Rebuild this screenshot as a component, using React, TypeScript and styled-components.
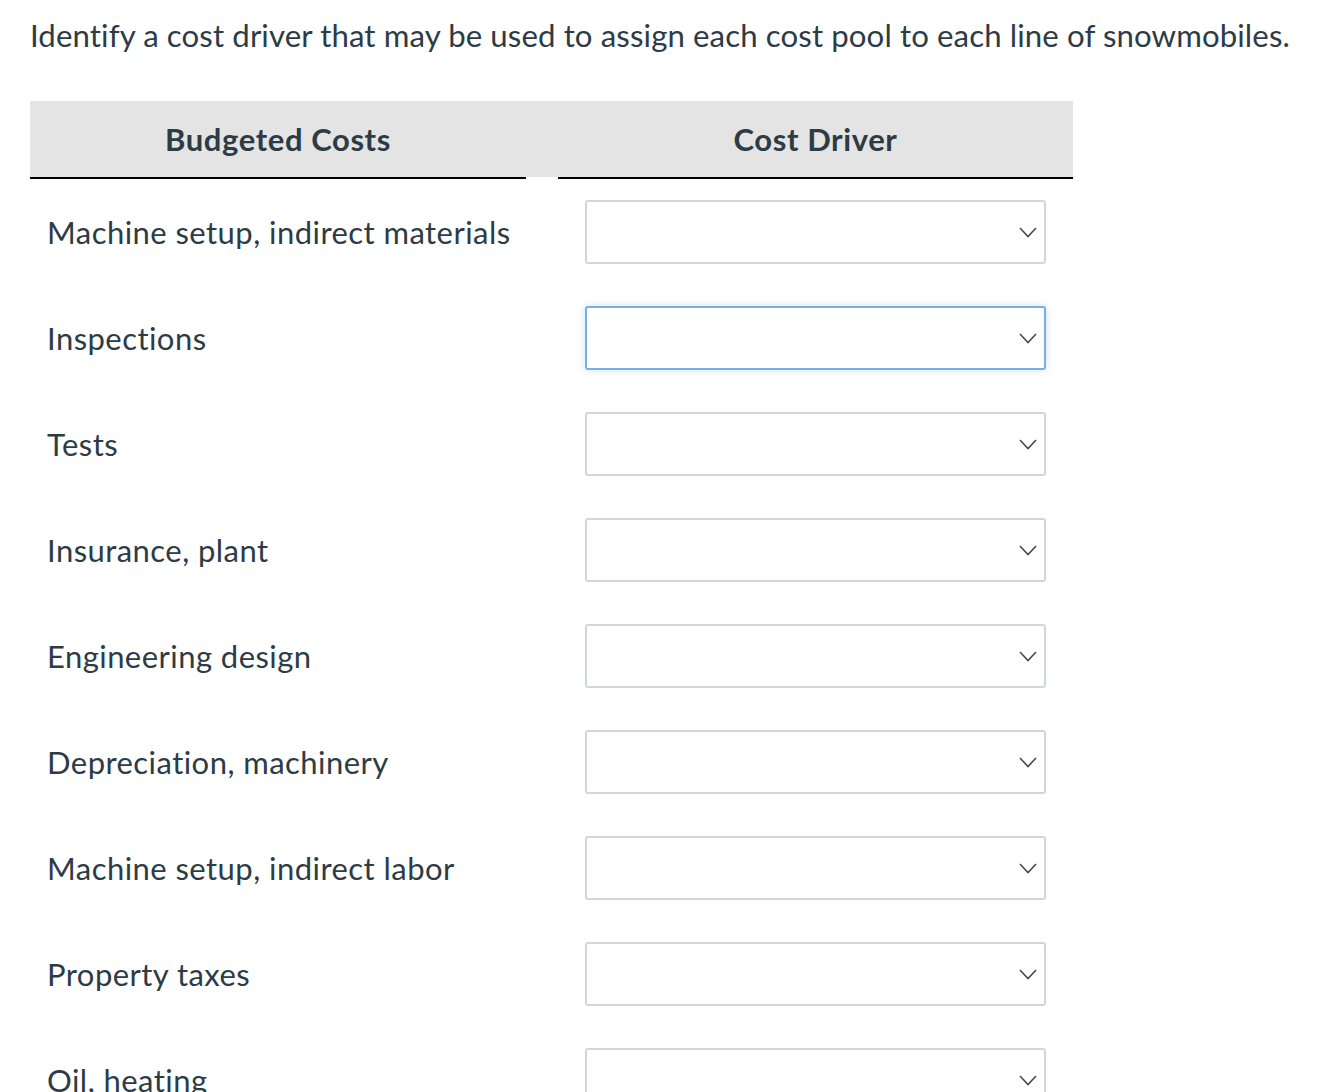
import React from 'react';
import styled, {createGlobalStyle} from "styled-components";

const GlobalStyle = createGlobalStyle`
  body {
    margin: 0;
    background: #fff;
    font-family: Lato, "Open Sans", sans-serif;
    color: #2d3b45;
  }
`

const rows = [
    'Machine setup, indirect materials',
    'Inspections',
    'Tests',
    'Insurance, plant',
    'Engineering design',
    'Depreciation, machinery',
    'Machine setup, indirect labor',
    'Property taxes',
    'Oil, heating',
]

const Chevron = () => (
    <svg width="18" height="11" viewBox="0 0 18 11" fill="none">
        <path d="M1 1 L9 9.5 L17 1" stroke="#4a4a4a" strokeWidth="1.6"/>
    </svg>
)

export default function App() {
    return (
        <Page>
            <GlobalStyle/>
            <Question>Identify a cost driver that may be used to assign each cost pool to each line of snowmobiles.</Question>
            <Table>
                <HeadCell>Budgeted Costs</HeadCell>
                <HeadCell>Cost Driver</HeadCell>
                {rows.map((label, i) => (
                    <React.Fragment key={i}>
                        <LabelCell>{label}</LabelCell>
                        <SelectCell>
                            <SelectBox focused={i === 1}>
                                <Chevron/>
                            </SelectBox>
                        </SelectCell>
                    </React.Fragment>
                ))}
            </Table>
        </Page>
    )
}

const Page = styled.div`
  padding: 16px 0 0 30px;
  height: 1092px;
  overflow: hidden;
  box-sizing: border-box;
`

const Question = styled.p`
  margin: 0 0 47px;
  font-size: 31.2px;
  letter-spacing: 0.1px;
  line-height: 38px;
  white-space: nowrap;
`

const Table = styled.div`
  display: grid;
  grid-template-columns: 496px 515px;
  column-gap: 32px;
  width: 1043px;
  background: linear-gradient(#e4e4e4, #e4e4e4) top / 100% 76px no-repeat;
`

const HeadCell = styled.div`
  height: 76px;
  border-bottom: 2px solid #000;
  display: flex;
  align-items: center;
  justify-content: center;
  font-size: 31px;
  letter-spacing: 0.6px;
  font-weight: 700;
`

const LabelCell = styled.div`
  display: flex;
  align-items: center;
  padding: 21px 0 21px 17px;
  font-size: 31px;
  letter-spacing: 0.45px;
  height: 64px;
  white-space: nowrap;
`

const SelectCell = styled.div`
  padding: 21px 27px 21px 27px;
`

const SelectBox = styled.div<{ focused?: boolean }>`
  height: 64px;
  box-sizing: border-box;
  border: ${p => p.focused ? '2px solid #78aee6' : '2px solid #d3d6d9'};
  border-radius: 3px;
  background: #fff;
  display: flex;
  align-items: center;
  justify-content: flex-end;
  padding: 0 7px 0 0;
  box-shadow: ${p => p.focused ? '0 0 8px rgba(120, 170, 230, 0.35)' : 'none'};
`
